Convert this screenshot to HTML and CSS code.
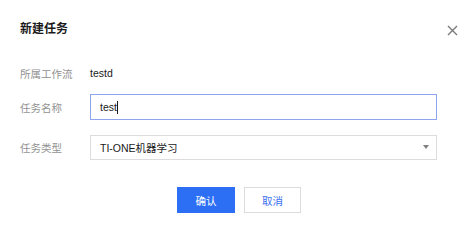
FILE: index.html
```html
<!DOCTYPE html>
<html lang="zh-CN">
<head>
<meta charset="utf-8">
<title>新建任务</title>
<link rel="stylesheet" href="styles.css">
</head>
<body>
<div class="dialog">
  <div class="header">
    <div class="title">新建任务</div>
    <svg class="close" width="11" height="11" viewBox="0 0 11 11" aria-label="关闭">
      <path d="M1 1 L10 10 M10 1 L1 10" stroke="#7a7a7a" stroke-width="1.4" fill="none"/>
    </svg>
  </div>
  <div class="form">
    <div class="row row-text">
      <div class="label">所属工作流</div>
      <div class="value">testd</div>
    </div>
    <div class="row">
      <div class="label">任务名称</div>
      <div class="field focused"><span>test</span><span class="caret"></span></div>
    </div>
    <div class="row">
      <div class="label">任务类型</div>
      <div class="field select"><span>TI-ONE机器学习</span><span class="arrow"></span></div>
    </div>
  </div>
  <div class="footer">
    <div class="btn primary">确认</div>
    <div class="btn">取消</div>
  </div>
</div>
</body>
</html>
```
FILE: styles.css
```css
html, body {
  margin: 0;
  padding: 0;
  background: #ffffff;
}
body {
  font-family: "Liberation Sans", "Noto Sans CJK SC", sans-serif;
  width: 474px;
  height: 232px;
  overflow: hidden;
}
.dialog {
  padding: 20px 16px 0 20px;
}
.header {
  display: flex;
  align-items: center;
  justify-content: space-between;
  height: 18px;
}
.title {
  font-size: 12px;
  font-weight: bold;
  color: #1a1a1a;
  line-height: 18px;
}
.close {
  display: block;
  margin-top: 2px;
}
.form {
  margin-top: 22px;
  padding-right: 21px;
  display: flex;
  flex-direction: column;
  gap: 14px;
}
.row {
  display: flex;
  align-items: center;
  height: 26px;
}
.row-text {
  margin-bottom: -6px;
}
.label {
  width: 70px;
  flex: none;
  font-size: 10.5px;
  color: #929292;
}
.value {
  font-size: 10.5px;
  color: #1a1a1a;
}
.field {
  flex: 1;
  height: 26px;
  box-sizing: border-box;
  border: 1px solid #dcdcdc;
  display: flex;
  align-items: center;
  padding-left: 9px;
  font-size: 10.5px;
  color: #1a1a1a;
}
.field.focused {
  border-color: #8ea4ee;
}
.caret {
  width: 1px;
  height: 13px;
  background: #1a1a1a;
}
.select {
  justify-content: space-between;
  padding-right: 7px;
  height: 25px;
}
.arrow {
  width: 0;
  height: 0;
  border-left: 3px solid transparent;
  border-right: 3px solid transparent;
  border-top: 4px solid #808080;
}
.footer {
  display: flex;
  justify-content: center;
  gap: 9px;
  margin-top: 27px;
}
.btn {
  width: 57px;
  height: 26px;
  box-sizing: border-box;
  border: 1px solid #dcdcdc;
  display: flex;
  align-items: center;
  justify-content: center;
  font-size: 10.5px;
  color: #3a6ff0;
  background: #ffffff;
}
.btn.primary {
  width: 58px;
  background: #2c6ff4;
  border-color: #2c6ff4;
  color: #ffffff;
}
```
